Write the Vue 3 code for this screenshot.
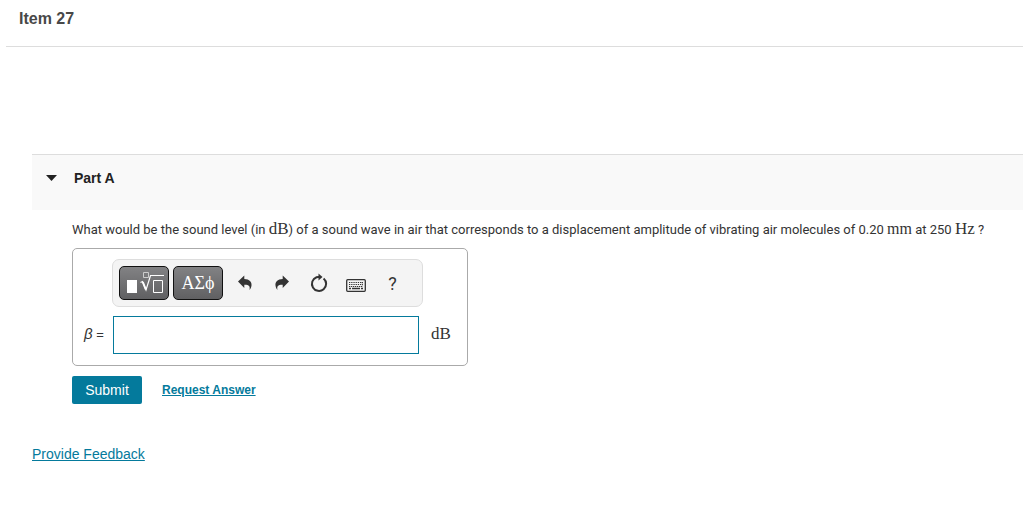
<script setup>
import { ref } from 'vue'

const open = ref(true)
const answer = ref('')
</script>

<template>
  <div class="page">
    <header class="item-head">
      <h1>Item 27</h1>
    </header>

    <main class="content">
      <section>
        <div class="part-head">
          <button class="toggle" type="button" aria-label="Toggle Part A" :aria-expanded="open" @click="open = !open">
            <svg width="11" height="6" viewBox="0 0 11 6"><path d="M0 0h11L5.500 6z" fill="#222" /></svg>
          </button>
          <h2>Part A</h2>
        </div>

        <div v-show="open" class="part-body">
          <p class="question">What would be the sound level (in <span class="unit">dB</span>) of a sound wave in air that corresponds to a displacement amplitude of vibrating air molecules of 0.20 <span class="unit small">mm</span> at 250 <span class="unit">Hz</span> ?</p>

          <form class="answer-box" @submit.prevent>
            <div class="toolbar">
              <button class="dark" type="button" aria-label="Templates">
                <svg width="40" height="24" viewBox="0 0 40 24" fill="none">
                  <path d="M3 9h10v13H3z" fill="#fff" />
                  <path d="M19.500 1.500h5v5h-5z" stroke="#ccc" />
                  <path d="M16.500 11.500l2-1 3.500 8.500 4.500-14.500H40" stroke="#fff" stroke-width="1.200" />
                  <path d="M18.800 11l3 7.500" stroke="#fff" stroke-width="2" />
                  <path d="M29.500 9.500h9v12h-9z" stroke="#fff" />
                </svg>
              </button>
              <button class="dark greek" type="button" aria-label="Symbols">ΑΣϕ</button>
              <button class="tool" type="button" aria-label="Undo">
                <svg width="14" height="16" viewBox="0 0 14 16"><path d="M0 6.500L6.300 .5v3.500C11.500 4.100 14 7 13.500 10.500c-.2 1.800-.9 3.200-2 4.500.8-3.400-.3-5.300-5.200-5.200V13z" fill="#333" /></svg>
              </button>
              <button class="tool" type="button" aria-label="Redo">
                <svg width="14" height="16" viewBox="0 0 14 16"><path d="M14 6.500L7.700 .5v3.500C2.500 4.100 0 7 .5 10.500c.2 1.800.9 3.200 2 4.500-.8-3.400.3-5.300 5.200-5.200V13z" fill="#333" /></svg>
              </button>
              <button class="tool" type="button" aria-label="Reset">
                <svg width="18" height="20" viewBox="0 0 18 20"><path d="M13.600 5.400A7.100 7.100 0 1 1 6.500 4.200L10 3.700" fill="none" stroke="#333" stroke-width="2" /><path d="M8.500 .5l4 3.500-4 3.500z" fill="#333" /></svg>
              </button>
              <button class="tool" type="button" aria-label="Keyboard shortcuts">
                <svg class="keyboard" width="20" height="13" viewBox="0 0 20 13" fill="none" stroke="#333">
                  <rect x=".7" y=".7" width="18.600" height="11.600" rx="1" stroke-width="1.300" />
                  <path d="M3 3.500h14M3 5.500h12" stroke-width="1.200" stroke-dasharray="1.300 .9" />
                  <path d="M16.300 3v4M3 7.500h14" stroke-width="1.200" stroke-dasharray="1.300 .7" />
                  <path d="M3 9.500h2M6 9.500h8M15 9.500h2" stroke-width="1.300" />
                </svg>
              </button>
              <button class="tool help" type="button" aria-label="Help">?</button>
            </div>
            <div class="entry">
              <label for="beta"><i>β</i> =</label>
              <input id="beta" v-model="answer" type="text" autocomplete="off" />
              <span class="unit">dB</span>
            </div>
          </form>

          <div class="actions">
            <button class="submit" type="button">Submit</button>
            <a class="request" href="#">Request Answer</a>
          </div>
        </div>
      </section>

      <a class="feedback" href="#">Provide Feedback</a>
    </main>
  </div>
</template>

<style>
body {
  background: #fff;
}
</style>

<style scoped>
.page {
  font-family: "Liberation Sans", Arial, sans-serif;
  color: #333;
}
h1, h2, p {
  margin: 0;
}
button {
  font-family: inherit;
  padding: 0;
  cursor: pointer;
}
svg {
  display: block;
}
.item-head {
  margin-left: 6px;
  padding: 9px 13px 18px;
  border-bottom: 1px solid #ddd;
}
h1 {
  font-size: 16px;
  line-height: 19px;
  color: #484848;
}
.content {
  padding: 107px 0 32px 32px;
}
.part-head {
  display: flex;
  align-items: flex-start;
  height: 55px;
  border-top: 1px solid #ddd;
  background: #f9f9f9;
}
.toggle {
  margin: 15px 10px 0 9px;
  padding: 5px;
  border: 0;
  background: none;
}
h2 {
  margin: 15px 0 0 2px;
  font-size: 14px;
  line-height: 16px;
  color: #222;
}
.part-body {
  padding: 9px 16px 0 40px;
}
.question {
  font-family: Roboto, sans-serif;
  font-size: 13px;
  line-height: 21px;
}
.unit {
  font-family: "Liberation Serif", "Times New Roman", serif;
  font-size: 17px;
  line-height: 20px;
}
.small {
  font-size: 16px;
}
.answer-box {
  box-sizing: border-box;
  width: 396px;
  max-width: 100%;
  margin-top: 8px;
  padding: 10px 11px 11px;
  border: 1px solid #aaa;
  border-radius: 5px;
}
.toolbar {
  box-sizing: border-box;
  display: flex;
  align-items: center;
  width: 311px;
  height: 48px;
  margin-left: 28px;
  padding: 0 6px;
  border: 1px solid #ddd;
  border-radius: 7px;
  background: #f4f4f4;
}
.dark {
  box-sizing: border-box;
  display: flex;
  align-items: center;
  justify-content: center;
  width: 50px;
  height: 34px;
  margin-right: 4px;
  border: 1px solid #111;
  border-radius: 5px;
  background: linear-gradient(#828284, #606062);
  color: #fff;
}
.greek {
  margin-right: 3px;
  font-family: "Liberation Serif", "Times New Roman", serif;
  font-size: 18px;
}
.tool {
  display: flex;
  align-items: center;
  justify-content: center;
  width: 37px;
  height: 34px;
  border: 0;
  background: none;
  color: #333;
}
.keyboard {
  margin-top: 4px;
}
.help {
  font-family: Roboto, sans-serif;
  font-size: 18px;
}
.entry {
  display: flex;
  align-items: center;
  margin-top: 9px;
}
label {
  width: 29px;
  padding-bottom: 4px;
  font-size: 13px;
  white-space: nowrap;
}
label i {
  font-size: 15px;
}
input {
  box-sizing: border-box;
  width: 306px;
  height: 38px;
  margin-right: 12px;
  padding: 0 8px;
  border: 1px solid #047a9c;
  border-radius: 0;
  background: #fff;
  font-family: inherit;
  font-size: 16px;
  outline: 0;
}
.entry .unit {
  padding-bottom: 2px;
}
.actions {
  display: flex;
  align-items: center;
  margin-top: 10px;
}
.submit {
  width: 70px;
  height: 28px;
  margin-right: 20px;
  border: 0;
  border-radius: 2px;
  background: #047a9c;
  color: #fff;
  font-size: 14px;
}
a {
  color: #047a9c;
}
.request {
  font-size: 12px;
  font-weight: bold;
}
.feedback {
  display: inline-block;
  margin-top: 42px;
  font-size: 14px;
  line-height: 16px;
}
</style>
